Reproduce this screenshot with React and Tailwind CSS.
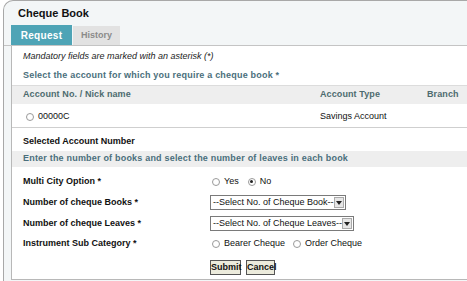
import React from "react";

const Radio = ({ checked }) => (
    <span className="inline-flex w-[8px] h-[8px] rounded-full border border-[#9a9a9a] bg-white items-center justify-center mr-[4px] shrink-0">
        {checked && <span className="w-[3px] h-[3px] rounded-full bg-[#222]" />}
    </span>
);

const Select = ({ label, width }) => (
    <div className={`flex items-center h-[15px] border border-[#7a7a7a] bg-white ${width}`}>
        <span className="flex-1 pl-[2px] text-[9px] leading-none text-[#111] whitespace-nowrap">{label}</span>
        <span className="w-[10px] h-[11px] mr-[1px] bg-[#e6e6e6] border border-[#aaa] flex items-center justify-center">
            <svg width="6" height="4" viewBox="0 0 6 4">
                <path d="M0 0h6L3 4z" fill="#222" />
            </svg>
        </span>
    </div>
);

const formRows = [
    { label: "Multi City Option *", h: "h-[21px]" },
    { label: "Number of cheque Books *", h: "h-[21px]" },
    { label: "Number of cheque Leaves *", h: "h-[21px]" },
    { label: "Instrument Sub Category *", h: "h-[20px]" },
];

export default function App() {
    return (
        <div className="w-[467px] h-[281px] bg-white overflow-hidden font-['Liberation_Sans',Arial,sans-serif]">
            <div className="ml-[3px] h-[281px] border-l border-t border-[#a8a8a8] rounded-tl-[10px] bg-[#f3f6f7] flex flex-col">
                {/* header */}
                <div className="h-[25px] pl-[14px] pt-[5px] text-[11px] font-bold text-[#111] leading-[14px]">Cheque Book</div>
                <div className="flex items-end h-[20px] pl-[7px] border-b border-[#c4c4c4]">
                    <div className="w-[61px] h-[20px] bg-[#4ea4b6] text-white text-[10px] font-bold tracking-[0.3px] flex items-center justify-center">Request</div>
                    <div className="w-[47px] h-[19px] ml-[1px] bg-[#e2e2e2] text-[#8a8a8a] text-[9px] font-bold flex items-center justify-center">History</div>
                </div>
                {/* content */}
                <div className="ml-[7px] flex-1 bg-white border-l border-b border-[#b8b8b8] mb-[1px] flex flex-col text-[9px] text-[#111]">
                    <div className="h-[22px] pl-[11px] flex items-center italic text-[#222]">Mandatory fields are marked with an asterisk (*)</div>
                    <div className="h-[16px] pl-[11px] flex items-center font-bold text-[#4a6f7c] tracking-[0.2px]">Select the account for which you require a cheque book *</div>
                    <div className="h-[19px] mt-[1px] bg-[#eeeeee] border-t border-[#dcdcdc] flex items-center font-bold text-[#4d6b6e] tracking-[0.1px]">
                        <span className="w-[308px] pl-[11px]">Account No. / Nick name</span>
                        <span className="w-[107px]">Account Type</span>
                        <span>Branch</span>
                    </div>
                    <div className="h-[24px] pt-[3px] flex items-center border-b border-[#cfcfcf] text-[#111]">
                        <span className="w-[308px] pl-[14px] flex items-center"><Radio />00000C</span>
                        <span>Savings Account</span>
                    </div>
                    <div className="h-[23px] pl-[11px] pt-[4px] flex items-center font-bold text-[#111]">Selected Account Number</div>
                    <div className="h-[16px] bg-[#eeeeee] pl-[11px] flex items-center font-bold text-[#4a6f7c] tracking-[0.2px]">Enter the number of books and select the number of leaves in each book</div>
                    <div className="pt-[4px] flex flex-col">
                        {formRows.map((row, i) => (
                            <div key={i} className={`${row.h} flex items-center`}>
                                <span className="w-[198px] pl-[11px] font-bold">{row.label}</span>
                                {i === 0 && (
                                    <span className="flex items-center pl-[2px]">
                                        <Radio />Yes<span className="w-[9px]" /><Radio checked />No
                                    </span>
                                )}
                                {i === 1 && <Select label="--Select No. of Cheque Book--" width="w-[136px]" />}
                                {i === 2 && <Select label="--Select No. of Cheque Leaves--" width="w-[144px]" />}
                                {i === 3 && (
                                    <span className="flex items-center pl-[2px]">
                                        <Radio />Bearer Cheque<span className="w-[8px]" /><Radio />Order Cheque
                                    </span>
                                )}
                            </div>
                        ))}
                        <div className="flex pl-[198px] pt-[6px] gap-[5px]">
                            <button className="h-[15px] w-[31px] bg-[#ecebdc] border border-[#555] text-[9px] font-bold leading-none text-[#111]">Submit</button>
                            <button className="h-[15px] w-[29px] bg-[#ecebdc] border border-[#555] text-[9px] font-bold leading-none text-[#111]">Cancel</button>
                        </div>
                    </div>
                </div>
            </div>
        </div>
    );
}
